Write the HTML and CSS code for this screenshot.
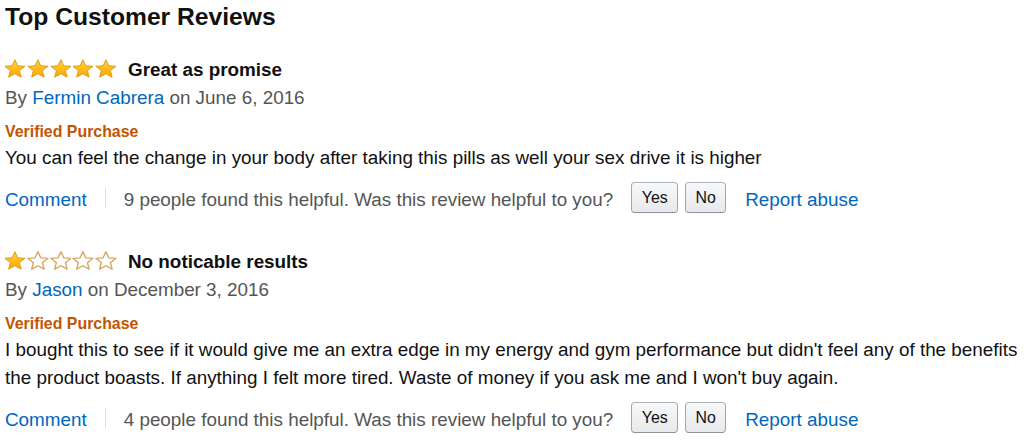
FILE: index.html
```html
<!DOCTYPE html>
<html>
<head>
<meta charset="utf-8">
<link rel="stylesheet" href="styles.css">
</head>
<body>
<svg class="defs" width="0" height="0">
  <defs>
    <linearGradient id="gold" x1="0" y1="0" x2="0" y2="1">
      <stop offset="0" stop-color="#ffd23a"/>
      <stop offset="1" stop-color="#ffa800"/>
    </linearGradient>
  </defs>
</svg>
<h2 class="heading">Top Customer Reviews</h2>

<div class="review">
  <div class="review-title-row">
    <span class="stars">
      <svg class="star" viewBox="0.5 0 23 22" preserveAspectRatio="none"><polygon class="full" points="12,0.8 14.94,7.95 22.6,8.45 16.76,13.55 18.6,21 12,17 5.4,21 7.24,13.55 1.4,8.45 9.06,7.95"/></svg>
      <svg class="star" viewBox="0.5 0 23 22" preserveAspectRatio="none"><polygon class="full" points="12,0.8 14.94,7.95 22.6,8.45 16.76,13.55 18.6,21 12,17 5.4,21 7.24,13.55 1.4,8.45 9.06,7.95"/></svg>
      <svg class="star" viewBox="0.5 0 23 22" preserveAspectRatio="none"><polygon class="full" points="12,0.8 14.94,7.95 22.6,8.45 16.76,13.55 18.6,21 12,17 5.4,21 7.24,13.55 1.4,8.45 9.06,7.95"/></svg>
      <svg class="star" viewBox="0.5 0 23 22" preserveAspectRatio="none"><polygon class="full" points="12,0.8 14.94,7.95 22.6,8.45 16.76,13.55 18.6,21 12,17 5.4,21 7.24,13.55 1.4,8.45 9.06,7.95"/></svg>
      <svg class="star" viewBox="0.5 0 23 22" preserveAspectRatio="none"><polygon class="full" points="12,0.8 14.94,7.95 22.6,8.45 16.76,13.55 18.6,21 12,17 5.4,21 7.24,13.55 1.4,8.45 9.06,7.95"/></svg>
    </span>
    <span class="review-title">Great as promise</span>
  </div>
  <div class="byline">By <a class="link" href="#">Fermin Cabrera</a> on June 6, 2016</div>
  <div class="verified">Verified Purchase</div>
  <div class="review-text">You can feel the change in your body after taking this pills as well your sex drive it is higher</div>
  <div class="actions">
    <a class="link action-text" href="#">Comment</a>
    <span class="divider"></span>
    <span class="helpful action-text">9 people found this helpful. Was this review helpful to you?</span>
    <button class="btn btn-yes">Yes</button>
    <button class="btn btn-no">No</button>
    <a class="link action-text report" href="#">Report abuse</a>
  </div>
</div>

<div class="review second">
  <div class="review-title-row">
    <span class="stars">
      <svg class="star" viewBox="0.5 0 23 22" preserveAspectRatio="none"><polygon class="full" points="12,0.8 14.94,7.95 22.6,8.45 16.76,13.55 18.6,21 12,17 5.4,21 7.24,13.55 1.4,8.45 9.06,7.95"/></svg>
      <svg class="star" viewBox="0.5 0 23 22" preserveAspectRatio="none"><polygon class="empty" points="12,0.8 14.94,7.95 22.6,8.45 16.76,13.55 18.6,21 12,17 5.4,21 7.24,13.55 1.4,8.45 9.06,7.95"/></svg>
      <svg class="star" viewBox="0.5 0 23 22" preserveAspectRatio="none"><polygon class="empty" points="12,0.8 14.94,7.95 22.6,8.45 16.76,13.55 18.6,21 12,17 5.4,21 7.24,13.55 1.4,8.45 9.06,7.95"/></svg>
      <svg class="star" viewBox="0.5 0 23 22" preserveAspectRatio="none"><polygon class="empty" points="12,0.8 14.94,7.95 22.6,8.45 16.76,13.55 18.6,21 12,17 5.4,21 7.24,13.55 1.4,8.45 9.06,7.95"/></svg>
      <svg class="star" viewBox="0.5 0 23 22" preserveAspectRatio="none"><polygon class="empty" points="12,0.8 14.94,7.95 22.6,8.45 16.76,13.55 18.6,21 12,17 5.4,21 7.24,13.55 1.4,8.45 9.06,7.95"/></svg>
    </span>
    <span class="review-title">No noticable results</span>
  </div>
  <div class="byline">By <a class="link" href="#">Jason</a> on December 3, 2016</div>
  <div class="verified">Verified Purchase</div>
  <div class="review-text">I bought this to see if it would give me an extra edge in my energy and gym performance but didn't feel any of the benefits the product boasts. If anything I felt more tired. Waste of money if you ask me and I won't buy again.</div>
  <div class="actions">
    <a class="link action-text" href="#">Comment</a>
    <span class="divider"></span>
    <span class="helpful action-text">4 people found this helpful. Was this review helpful to you?</span>
    <button class="btn btn-yes">Yes</button>
    <button class="btn btn-no">No</button>
    <a class="link action-text report" href="#">Report abuse</a>
  </div>
</div>
</body>
</html>
```

FILE: styles.css
```css
html, body {
  margin: 0;
  padding: 0;
  background: #ffffff;
}

body {
  font-family: "Liberation Sans", Arial, sans-serif;
  font-size: 18.85px;
  line-height: 28px;
  color: #111111;
  padding: 2px 0 0 5px;
  width: 1024px;
  box-sizing: border-box;
}

.defs {
  display: block;
  width: 0;
  height: 0;
  overflow: hidden;
}

.heading {
  margin: 0;
  font-size: 24.65px;
  line-height: 30px;
  font-weight: 700;
  color: #111111;
}

.review {
  margin-top: 24px;
}

.review.second {
  margin-top: 35px;
}

.review-title-row {
  display: flex;
  align-items: flex-start;
  height: 28px;
}

.stars {
  display: flex;
  margin-top: 3px;
  margin-left: -1px;
  width: 114px;
  gap: 1px;
}

.star {
  width: 21.8px;
  height: 19px;
  display: block;
}

.full {
  fill: url(#gold);
  stroke: #d9960f;
  stroke-width: 1;
  stroke-linejoin: round;
}

.empty {
  fill: #ffffff;
  stroke: #d8a663;
  stroke-width: 1.5;
  stroke-linejoin: round;
}

.review-title {
  font-weight: 700;
  margin-left: 10px;
}

.byline {
  color: #555555;
}

.link {
  color: #0066c0;
  text-decoration: none;
}

.verified {
  margin-top: 8px;
  font-size: 15.9px;
  line-height: 24px;
  font-weight: 700;
  color: #c45500;
}

.review-text {
  color: #111111;
}

.actions {
  display: flex;
  align-items: flex-start;
  margin-top: 10px;
  height: 31px;
}

.action-text {
  margin-top: 3.6px;
}

.divider {
  width: 1px;
  height: 20px;
  background: #dddddd;
  margin: 6px 18px 0 18px;
}

.helpful {
  color: #555555;
}

.btn {
  font-family: "Liberation Sans", Arial, sans-serif;
  font-size: 15.9px;
  color: #111111;
  height: 31px;
  padding: 0;
  border: 1px solid #adb1b8;
  border-color: #adb1b8 #a2a6ac #8d9096;
  border-radius: 4px;
  background: linear-gradient(to bottom, #f7f8fa, #e7e9ec);
  box-shadow: inset 0 1px 0 rgba(255,255,255,0.6);
  cursor: pointer;
}

.btn-yes {
  width: 47px;
  margin-left: 18px;
}

.btn-no {
  width: 41px;
  margin-left: 7px;
}

.report {
  margin-left: 19px;
}
```
